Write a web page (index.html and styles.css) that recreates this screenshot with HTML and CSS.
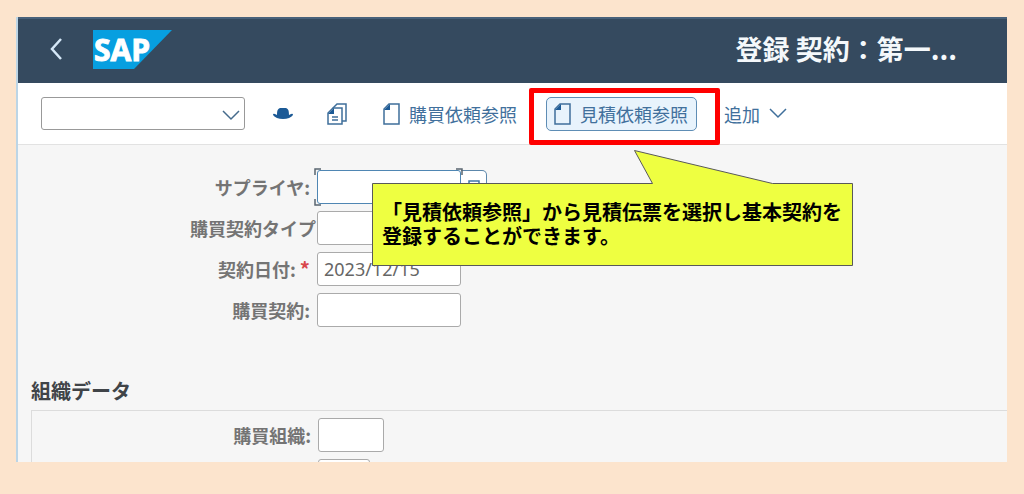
FILE: index.html
```html
<!DOCTYPE html>
<html lang="ja">
  <head>
    <meta charset="UTF-8" />
    <meta name="viewport" content="width=device-width, initial-scale=1.0" />
    <title>登録 契約</title>
    <link rel="stylesheet" href="styles.css">
  </head>
  <body>
    <div class="window">
      <header class="header">
        <button class="back" type="button" aria-label="戻る">
          <svg width="14" height="24" viewBox="0 0 14 24"><path d="M12 2 L3 12 L12 22" /></svg>
        </button>
        <svg class="logo" width="79" height="39" viewBox="0 0 79 39" role="img" aria-label="SAP">
          <path d="M0 0 H79 L41 39 H0 Z" />
          <text x="1" y="31">SAP</text>
        </svg>
        <h1>登録 契約：第一...</h1>
      </header>

      <div class="toolbar">
        <div class="select-box">
          <select aria-label="コマンド"><option></option></select>
          <svg class="arrow" width="18" height="11" viewBox="0 0 18 11"><path d="M1 1 L9 9 L17 1" /></svg>
        </div>
        <button class="tool hat" type="button" aria-label="サービス">
          <svg width="20" height="13" viewBox="0 0 20 13">
            <path class="solid" d="M4 8 C4 3 5 1 8 1 H12 C15 1 16 3 16 8 L18 7 Q20 6 20 8 Q17 12 10 12 Q3 12 0 8 Q0 6 2 7 Z" />
          </svg>
        </button>
        <button class="tool copy" type="button" aria-label="コピー">
          <svg width="20" height="22" viewBox="0 0 20 22">
            <path d="M6 5 L10 1 H19 V18 H15" />
            <path d="M6 5 H15 V21 H1 V10 Z" />
            <path class="solid" d="M1 11 L7 5 V11 Z" />
            <path d="M5 14 H11 M5 17 H11" />
          </svg>
        </button>
        <button class="tool" type="button">
          <svg width="17" height="22" viewBox="0 0 17 22">
            <path d="M6 1 H16 V21 H1 V6 Z" />
            <path class="solid" d="M1 7 L7 1 V7 Z" />
          </svg>
          購買依頼参照
        </button>
        <div class="highlight">
          <button class="tool active" type="button">
            <svg width="17" height="22" viewBox="0 0 17 22">
              <path d="M6 1 H16 V21 H1 V6 Z" />
              <path class="solid" d="M1 7 L7 1 V7 Z" />
            </svg>
            見積依頼参照
          </button>
          <div class="callout">
            <svg width="481" height="117" viewBox="0 0 481 117">
              <path d="M0.5 33.5 H280.5 L262.5 0.5 L400.5 33.5 H480.5 V115.5 H0.5 Z" />
            </svg>
            <p>「見積依頼参照」から見積伝票を選択し基本契約を<br>登録することができます。</p>
          </div>
        </div>
        <button class="tool more" type="button">
          追加
          <svg width="18" height="11" viewBox="0 0 18 11"><path d="M1 1 L9 9 L17 1" /></svg>
        </button>
      </div>

      <main class="content">
        <div class="row">
          <label for="supplier">サプライヤ:</label>
          <div class="field focused">
            <input type="text" id="supplier">
            <button class="help" type="button" aria-label="値ヘルプ">
              <svg width="12" height="14" viewBox="0 0 12 14"><path d="M1 1 H11 V13 H1 Z" /></svg>
            </button>
            <svg class="corners" width="149" height="38" viewBox="0 0 149 38">
              <path d="M1 7 V1 H7 M142 1 H148 V7 M1 31 V37 H7" />
            </svg>
          </div>
        </div>
        <div class="row">
          <label class="long" for="type">購買契約タイプ</label>
          <input type="text" id="type">
        </div>
        <div class="row">
          <label for="date">契約日付: <span class="required">*</span></label>
          <input type="text" id="date" value="2023/12/15">
        </div>
        <div class="row">
          <label for="contract">購買契約:</label>
          <input type="text" id="contract">
        </div>

        <h2>組織データ</h2>
        <section class="panel">
          <div class="row">
            <label for="org">購買組織:</label>
            <input class="short" type="text" id="org">
          </div>
          <div class="row">
            <label for="group"></label>
            <input class="shorter" type="text" id="group" aria-label="購買グループ">
          </div>
        </section>
      </main>
    </div>
  </body>
</html>
```
FILE: styles.css
```css
* {
  box-sizing: border-box;
}
body {
  display: flex;
  height: 100vh;
  margin: 0;
  padding: 17px 17px 32px 16px;
  background: #fce4cd;
  font-family: "Noto Sans CJK JP", sans-serif;
  font-size: 18px;
}
button {
  padding: 0;
  border: none;
  background: none;
  font: inherit;
  cursor: pointer;
}
svg {
  display: block;
  flex: none;
  fill: none;
}
.window {
  display: flex;
  flex-direction: column;
  flex: 1;
  min-width: 0;
  overflow: hidden;
  border-left: 2px solid #bcd5e6;
  background: #f6f6f6;
}

/* header */
.header {
  display: flex;
  flex: none;
  align-items: center;
  height: 66px;
  padding: 0 50px 2px 31px;
  background: #354a5f;
  box-shadow: inset 0 2px #48617a;
}
.back svg {
  stroke: #d5e8f8;
  stroke-width: 2.5;
}
.logo {
  margin-left: 30px;
}
.logo path {
  fill: #079fe0;
}
.logo text {
  fill: #fff;
  stroke: #fff;
  stroke-width: 1;
  font-family: "Open Sans", sans-serif;
  font-size: 30px;
  font-weight: bold;
}
h1 {
  margin: 0 0 0 auto;
  color: #f4f8fb;
  font-size: 27px;
  line-height: 36px;
}

/* toolbar */
.toolbar {
  display: flex;
  flex: none;
  align-items: center;
  height: 62px;
  padding: 0 23px;
  border-bottom: 1px solid #e2e2e2;
  background: #fff;
}
.select-box {
  position: relative;
  width: 204px;
}
.select-box select {
  display: block;
  appearance: none;
  width: 100%;
  height: 33px;
  border: 1px solid #999;
  border-radius: 3px;
  background: #fff;
}
.arrow {
  position: absolute;
  top: 13px;
  right: 5px;
  stroke: #456b8c;
  stroke-width: 1.5;
  pointer-events: none;
}
.tool {
  display: flex;
  align-items: center;
  gap: 9px;
  height: 34px;
  color: #41709c;
  line-height: 26px;
  white-space: nowrap;
}
.tool svg {
  stroke: #3f6f9b;
  stroke-width: 1.5;
}
.tool .solid {
  fill: #1c5a96;
  stroke: none;
}
.hat {
  margin-left: 28px;
}
.copy {
  margin: 0 36px 0 34px;
}
.highlight {
  position: relative;
  z-index: 1;
  margin: 0 27px 0 29px;
}
.highlight::before {
  content: "";
  position: absolute;
  inset: -9px -23px -14px -17px;
  border: 5px solid #f00;
  border-radius: 2px;
  pointer-events: none;
}
.active {
  padding: 0 8px 0 7px;
  border: 1px solid #5e8db5;
  border-radius: 5px;
  background: #e8f3fc;
}

/* callout over the form */
.callout {
  position: absolute;
  top: 53px;
  left: -174px;
}
.callout path {
  fill: #eeff41;
  stroke: #595959;
}
.callout p {
  position: absolute;
  top: 50px;
  left: 10px;
  margin: 0;
  color: #000;
  font-size: 20px;
  font-weight: bold;
  line-height: 24px;
  white-space: nowrap;
}

/* form */
.content {
  padding: 25px 0 0 13px;
}
.row {
  display: flex;
  align-items: center;
  margin-bottom: 7px;
}
.row label {
  width: 286px;
  padding-right: 7px;
  color: #747474;
  font-weight: bold;
  line-height: 26px;
  text-align: right;
  white-space: nowrap;
}
.row .long {
  padding-right: 1px;
}
.required {
  color: #d9474b;
  font-size: 20px;
}
.row input {
  width: 144px;
  height: 34px;
  padding: 0 6px;
  border: 1px solid #aaa;
  border-radius: 3px;
  background: #fff;
  color: #666;
  font-family: "Noto Sans", sans-serif;
  font-size: 18px;
}
.row .short {
  width: 66px;
}
.row .shorter {
  width: 52px;
}
.focused {
  position: relative;
  display: flex;
}
.focused input {
  border-color: #4f86b3;
}
.help {
  display: flex;
  align-items: center;
  justify-content: center;
  width: 26px;
  border: 1px solid #5c87ab;
  border-left: none;
  border-radius: 0 5px 5px 0;
  background: #fff;
}
.help svg {
  stroke: #3f76a6;
  stroke-width: 1.5;
}
.corners {
  position: absolute;
  top: -2px;
  left: -3px;
  stroke: #5a6570;
  stroke-width: 1.5;
  pointer-events: none;
}
h2 {
  margin: 49px 0 4px;
  color: #404448;
  font-size: 20px;
  line-height: 30px;
}
.panel {
  padding-top: 7px;
  border-top: 1px solid #dcdcdc;
  border-left: 1px solid #dcdcdc;
}
```
